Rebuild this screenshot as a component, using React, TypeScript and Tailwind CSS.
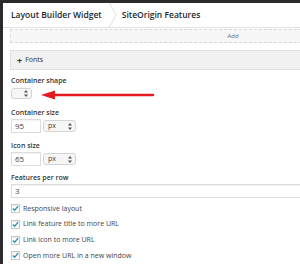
import React from 'react';

const Spinner = () => (
    <svg width="4" height="7" viewBox="0 0 4 7" className="shrink-0">
        <path d="M2 0 L4 2.5 L0 2.5 Z" fill="#555" />
        <path d="M2 7 L4 4.5 L0 4.5 Z" fill="#555" />
    </svg>
);

const Check = ({ label }: { label: string }) => (
    <div className="flex items-center h-[15.7px]">
        <div className="w-[9px] h-[9px] border border-[#c8c8c8] bg-white flex items-center justify-center shadow-[inset_0_1px_1px_rgba(0,0,0,0.08)]">
            <svg width="8" height="7" viewBox="0 0 8 7">
                <path d="M1 3.6 L3 5.6 L7 0.8" stroke="#1e8cbe" strokeWidth="1.6" fill="none" />
            </svg>
        </div>
        <span className="ml-[3px] text-[7px] text-[#444]">{label}</span>
    </div>
);

export default function App() {
    return (
        <div className="w-[300px] h-[264px] overflow-hidden bg-[#2b2b2b] flex flex-col" style={{ fontFamily: '"Open Sans", "Noto Sans", sans-serif' }}>
            <div className="h-[3px] shrink-0" />
            <div className="flex-1 ml-[3px] w-[460px] bg-white relative">
                {/* Header */}
                <div className="h-[25px] border-b border-[#e2e2e2] flex items-center text-[8.5px] font-semibold text-[#23282d]">
                    <span className="pl-[8px] pr-[7px]">Layout Builder Widget</span>
                    <svg width="8" height="24" viewBox="0 0 8 24" className="shrink-0">
                        <path d="M0.5 0 L7 12 L0.5 24" stroke="#e0e0e0" fill="none" />
                    </svg>
                    <span className="pl-[5px]">SiteOrigin Features</span>
                </div>

                <div className="px-[7px]">
                    <div className="mt-[1px] h-[14px] border border-dashed border-[#d6d6d6] bg-[#f7f7f7] flex items-center justify-center text-[6px] text-[#666]">
                        Add
                    </div>

                    <div className="mt-[7px] h-[20px] border border-[#e0e0e0] bg-[#f1f1f1] flex items-center pl-[6px] text-[7px] text-[#333]">
                        <span className="font-bold text-[9px] mr-[3px] leading-none">+</span>
                        Fonts
                    </div>

                    <div className="mt-[6px] pl-[1px] text-[7px] font-semibold text-[#333] leading-[10px]">Container shape</div>
                    <div className="mt-[2px] ml-[1px] w-[21px] h-[11px] rounded-[3px] border border-[#d4d4d4] bg-[#f6f6f6] flex items-center justify-end pr-[3px]">
                        <Spinner />
                    </div>

                    <div className="mt-[9px] pl-[1px] text-[7px] font-semibold text-[#333] leading-[10px]">Container size</div>
                    <div className="mt-[1px] ml-[1px] flex items-center gap-[2px]">
                        <div className="w-[30px] h-[14px] border border-[#dcdcdc] bg-white flex items-center pl-[3px] text-[8px] text-[#444] shadow-[inset_0_1px_1px_rgba(0,0,0,0.05)]">95</div>
                        <div className="w-[33px] h-[12px] rounded-[3px] border border-[#d4d4d4] bg-[#f6f6f6] flex items-center justify-between pl-[4px] pr-[3px] text-[7px] text-[#444]">
                            px<Spinner />
                        </div>
                    </div>

                    <div className="mt-[8px] pl-[1px] text-[7px] font-semibold text-[#333] leading-[10px]">Icon size</div>
                    <div className="mt-[1px] ml-[1px] flex items-center gap-[2px]">
                        <div className="w-[30px] h-[14px] border border-[#dcdcdc] bg-white flex items-center pl-[3px] text-[8px] text-[#444] shadow-[inset_0_1px_1px_rgba(0,0,0,0.05)]">65</div>
                        <div className="w-[33px] h-[12px] rounded-[3px] border border-[#d4d4d4] bg-[#f6f6f6] flex items-center justify-between pl-[4px] pr-[3px] text-[7px] text-[#444]">
                            px<Spinner />
                        </div>
                    </div>

                    <div className="mt-[7px] pl-[1px] text-[7px] font-semibold text-[#333] leading-[10px]">Features per row</div>
                    <div className="mt-[1px] ml-[1px] h-[14px] border border-[#dcdcdc] bg-white flex items-center pl-[3px] text-[8px] text-[#444] shadow-[inset_0_1px_1px_rgba(0,0,0,0.05)]">3</div>

                    <div className="mt-[3px] pl-[1px] flex flex-col">
                        <Check label="Responsive layout" />
                        <Check label="Link feature title to more URL" />
                        <Check label="Link icon to more URL" />
                        <Check label="Open more URL in a new window" />
                    </div>
                </div>

                {/* Red arrow pointing at container shape select */}
                <svg width="115" height="10" viewBox="0 0 115 10" className="absolute left-[38px] top-[87px]">
                    <path d="M12 5 L112 5" stroke="#e8191e" strokeWidth="2.4" strokeLinecap="round" />
                    <path d="M0 5 L14 0.5 L14 9.5 Z" fill="#e8191e" />
                </svg>
            </div>
        </div>
    );
}
